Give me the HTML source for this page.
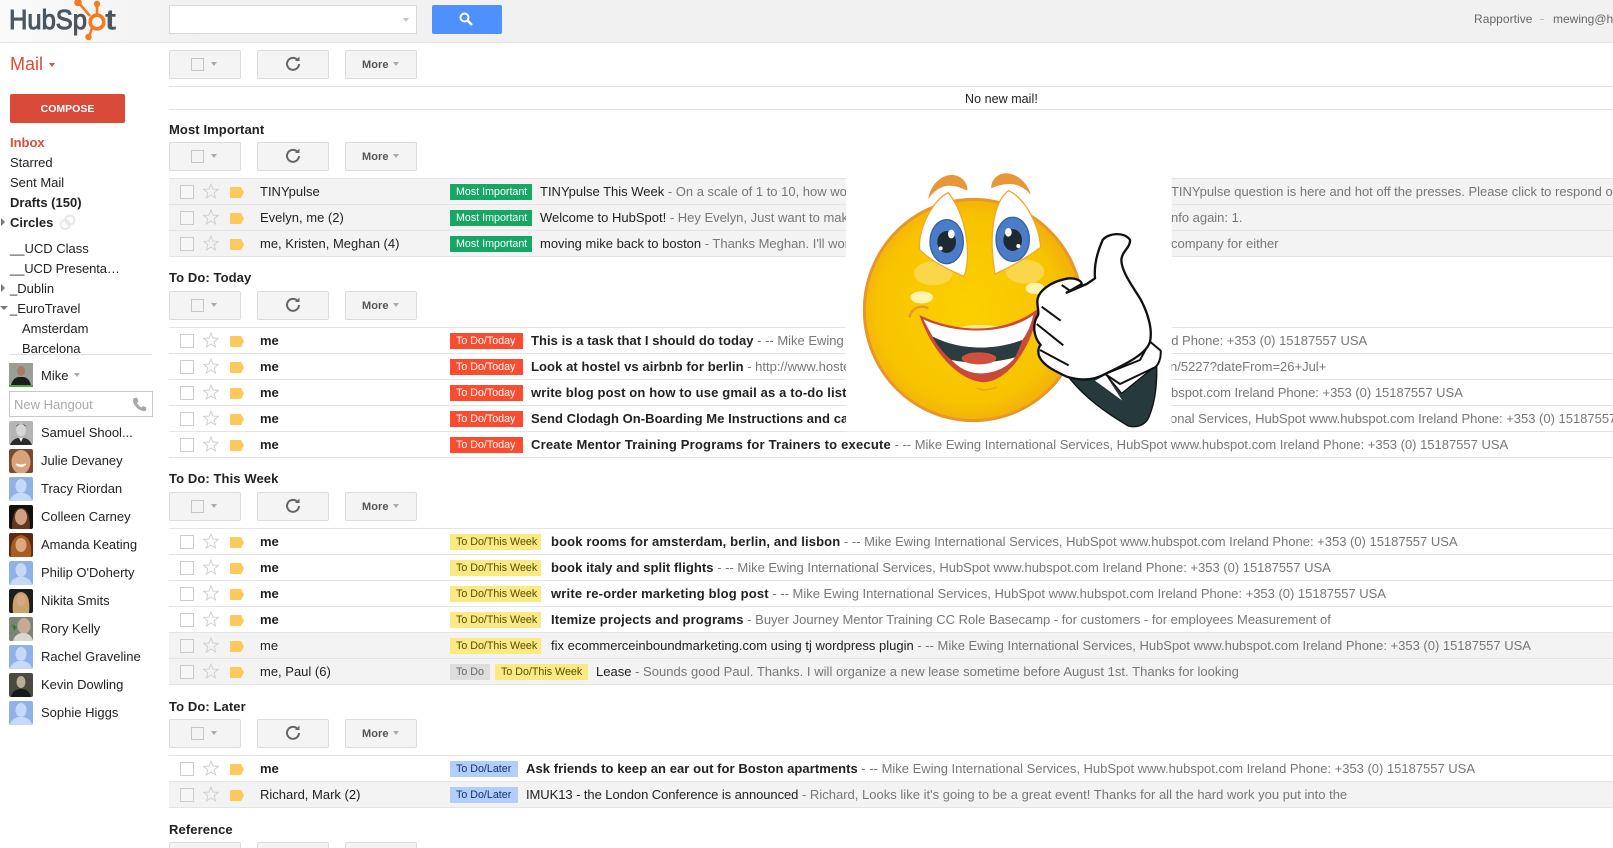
<!DOCTYPE html>
<html><head><meta charset="utf-8"><style>
html,body{margin:0;padding:0;background:#fff}
#p{position:relative;width:1613px;height:848px;overflow:hidden;font:13px "Liberation Sans",Arial,sans-serif;color:#222;background:#fff}
#p div,#p span.a,#p svg.a{position:absolute}
.hd{left:0;top:0;width:1613px;height:42px;background:linear-gradient(90deg,#fafafa 0,#f6f6f6 100px,#f1f1f1 200px);border-bottom:1px solid #e5e5e5}
.btn{width:70px;height:27px;background:#f4f4f4;border:1px solid #dcdcdc;border-radius:2px}
.cb{left:21px;top:7px;width:11px;height:11px;border:1px solid #c6c6c6}
.ar{width:0;height:0;border-left:3.5px solid transparent;border-right:3.5px solid transparent;border-top:4px solid #aaa}
.mo{left:16px;top:1px;line-height:27px;font-size:11px;font-weight:bold;color:#555;letter-spacing:.05px}
.h{left:169px;font-weight:bold;font-size:13px;line-height:16px;color:#222;white-space:nowrap;letter-spacing:.1px}
.r{left:168px;width:1445px;height:25px;border-top:1px solid #e4e4e4;line-height:25px;white-space:nowrap;clip-path:inset(0 0 0 1px)}
.g{background:#f3f3f3}
.e{height:0;left:169px;width:1444px;border-top:1px solid #e4e4e4}
.ck{left:12px;top:6px;width:12px;height:12px;border:1px solid #ccc;background:#fff}
.g .ck{background:#f6f6f6}
.s{left:35px;top:4px;width:16px;height:16px}
.l{left:62px;top:8px;width:14px;height:11px}
.n{left:92px;top:0;color:#222}
.u .n,.u .b{font-weight:bold}
.t{top:5px;height:16px;line-height:16px;font-size:10.7px;padding-left:6px;box-sizing:border-box}
.mi{left:282px;width:82px;background:#16a765;color:#fff}
.td{left:282px;width:73px;background:#fb4c2f;color:#fff}
.tw{left:282px;width:91px;background:#fbe983;color:#594c05}
.tl{left:282px;width:68px;background:#b3cefb;color:#0d3472}
.x{top:0;color:#222;white-space:nowrap}
.x em,.y{font-style:normal;color:#777;letter-spacing:-.01px}
.y{top:0;white-space:nowrap}
.nv{left:10px;line-height:16px;color:#222;white-space:nowrap}
.tri{width:0;height:0}
.av{left:9px;width:24px;height:24px;border-radius:2px;overflow:hidden}
.pn{left:41px;line-height:16px;color:#222;white-space:nowrap}
</style></head><body><div id="p">
<svg width="0" height="0" style="position:absolute"><defs>
<symbol id="star" viewBox="0 0 16 16"><path d="M8 1 L10 6.1 L15.4 6.3 L11.2 9.7 L12.6 15 L8 12 L3.4 15 L4.8 9.7 L.6 6.3 L6 6.1 Z" fill="none" stroke="#d0d0d0" stroke-width="1"/></symbol>
<symbol id="lab" viewBox="0 0 14 11"><path d="M0 1 Q0 0 1 0 H11 L14 5.5 L11 11 H1 Q0 11 0 10 Z" fill="#fbc95c"/></symbol>
<symbol id="ref" viewBox="0 0 16 16"><path d="M12.6 5 A6 6 0 1 0 14 9" fill="none" stroke="#666" stroke-width="2"/><path d="M10 6 H14.5 V1.5 Z" fill="#666"/></symbol>
<symbol id="def" viewBox="0 0 24 24"><rect width="24" height="24" fill="#8eb2e8"/><ellipse cx="12" cy="9" rx="5.5" ry="7" fill="#c6d9f6"/><path d="M1 24 Q2 18 9 16 H15 Q22 18 23 24 Z" fill="#c6d9f6"/></symbol>
</defs></svg>

<div class="hd"></div>
<svg class="a" style="left:0;top:0" width="130" height="42" viewBox="0 0 130 42">
<text x="9" y="29" font-family="Liberation Sans" font-size="28" fill="#4a5761" stroke="#4a5761" stroke-width="1" textLength="78" lengthAdjust="spacingAndGlyphs">HubSp</text>
<text x="105.5" y="29" font-family="Liberation Sans" font-size="28" fill="#4a5761" stroke="#4a5761" stroke-width="1" textLength="10" lengthAdjust="spacingAndGlyphs">t</text>
<g stroke="#f47b20" fill="none"><circle cx="97" cy="22" r="6.8" stroke-width="3.6"/><path d="M78 2 L90 16 M97 4 V14 M89 37 L92 28" stroke-width="2.6"/></g>
<g fill="#f47b20"><circle cx="78" cy="2.5" r="3.8"/><circle cx="97" cy="4" r="3.2"/><circle cx="88.5" cy="37" r="3.2"/></g>
</svg>
<div style="left:169px;top:5px;width:246px;height:27px;background:#fff;border:1px solid #d9d9d9"></div>
<div class="ar" style="left:403px;top:18px;border-top-color:#c4c4c4"></div>
<div style="left:432px;top:5px;width:70px;height:29px;background:#4d90fe;border-radius:2px"></div>
<svg class="a" style="left:459px;top:12px" width="14" height="14" viewBox="0 0 14 14"><circle cx="5.5" cy="5.5" r="4" fill="none" stroke="#fff" stroke-width="2"/><path d="M8.5 8.5 L13 13" stroke="#fff" stroke-width="2.4"/></svg>
<div style="left:1474px;top:12px;font-size:12px;line-height:15px;color:#666;white-space:nowrap;letter-spacing:.05px">Rapportive</div>
<div style="left:1540px;top:19px;width:4px;height:1px;background:#bbb"></div>
<div style="left:1553px;top:12px;font-size:12px;line-height:15px;color:#666;white-space:nowrap">mewing@hubspot.com</div>

<div style="left:10px;top:53px;font-size:18px;line-height:22px;color:#dd4b39">Mail</div>
<div class="ar" style="left:49px;top:63px;border-top-color:#dd4b39"></div>
<div style="left:10px;top:94px;width:115px;height:29px;background:#d94a38;border-radius:2px;color:#fff;font-size:10.5px;font-weight:bold;text-align:center;line-height:30px">COMPOSE</div>
<div class="nv" style="top:135px;color:#dd4b39;font-weight:bold">Inbox</div>
<div class="nv" style="top:155px">Starred</div>
<div class="nv" style="top:175px">Sent Mail</div>
<div class="nv" style="top:195px;font-weight:bold">Drafts (150)</div>
<div class="nv" style="top:215px;font-weight:bold">Circles</div>
<div class="tri" style="left:1px;top:218px;border-left:4px solid #777;border-top:4px solid transparent;border-bottom:4px solid transparent"></div>
<svg class="a" style="left:59px;top:214px" width="17" height="17" viewBox="0 0 17 17"><circle cx="6" cy="10.5" r="4.5" fill="none" stroke="#e8e8e8" stroke-width="2"/><circle cx="11" cy="6" r="4.5" fill="none" stroke="#e8e8e8" stroke-width="2"/></svg>
<div class="nv" style="top:241px">__UCD Class</div>
<div class="nv" style="top:261px;letter-spacing:-.1px">__UCD Presenta…</div>
<div class="nv" style="top:281px">_Dublin</div>
<div class="tri" style="left:1px;top:284px;border-left:4px solid #777;border-top:4px solid transparent;border-bottom:4px solid transparent"></div>
<div class="nv" style="top:301px">_EuroTravel</div>
<div class="tri" style="left:0;top:306px;border-top:4px solid #777;border-left:4px solid transparent;border-right:4px solid transparent"></div>
<div class="nv" style="top:321px;left:22px">Amsterdam</div>
<div class="nv" style="top:341px;left:22px">Barcelona</div>
<div style="left:9px;top:354px;width:143px;height:1px;background:#e2e2e2"></div>

<div class="av" style="top:363px;height:22px;border-radius:0"><svg width="24" height="22"><rect width="24" height="22" fill="#9a9f95"/><ellipse cx="12" cy="8" rx="4" ry="5" fill="#a87a60"/><path d="M2 22 Q4 15 9 14 H15 Q20 15 22 22 Z" fill="#1c1c1c"/></svg></div>
<div style="left:9px;top:385px;width:24px;height:2px;background:#4aa83c"></div>
<div class="pn" style="top:368px">Mike</div>
<div class="ar" style="left:74px;top:373px"></div>
<div style="left:9px;top:391px;width:142px;height:24px;border:1px solid #c8c8c8"></div>
<div class="pn" style="left:14px;top:397px;color:#aaa">New Hangout</div>
<svg class="a" style="left:132px;top:397px" width="15" height="15" viewBox="0 0 15 15"><path d="M2 1 L5 .5 L6.5 4.5 L5 6 Q6.5 9 9.5 10.5 L11 9 L14.5 10.5 L14 13.5 Q13 14.5 11 14 Q4 12.5 1 4.5 Q.8 2 2 1 Z" fill="#a8a8a8"/></svg>

<div class="av" style="top:421px"><svg width="24" height="24"><rect width="24" height="24" fill="#b5b5b5"/><ellipse cx="12" cy="9" rx="5" ry="6.5" fill="#d6d6d6"/><path d="M7 6 Q12 0 17 6 L16 4 Q12 2 8 4 Z" fill="#222"/><path d="M1 24 Q4 17 10 17 H14 Q20 17 23 24 Z" fill="#2a2a2a"/><path d="M10 17 L12 21 L14 17Z" fill="#eee"/></svg></div>
<div class="pn" style="top:425px">Samuel Shool...</div>
<div class="av" style="top:449px"><svg width="24" height="24"><rect width="24" height="24" fill="#7a4a30"/><ellipse cx="12" cy="13" rx="9.5" ry="12" fill="#d8a27a"/><path d="M7 15 Q12 20 17 15 Q12 17 7 15Z" fill="#fff" stroke="#fff"/></svg></div>
<div class="pn" style="top:453px">Julie Devaney</div>
<svg class="a av" style="top:477px"><use href="#def" width="24" height="24"/></svg>
<div class="pn" style="top:481px">Tracy Riordan</div>
<div class="av" style="top:505px"><svg width="24" height="24"><rect width="24" height="24" fill="#141010"/><path d="M3 24 Q3 3 12 3 Q21 3 21 24Z" fill="#5e3a22"/><ellipse cx="12" cy="12" rx="6" ry="8" fill="#d2a080"/></svg></div>
<div class="pn" style="top:509px">Colleen Carney</div>
<div class="av" style="top:533px"><svg width="24" height="24"><rect width="24" height="24" fill="#5a2a14"/><path d="M2 24 Q0 4 12 2 Q24 4 22 24Z" fill="#a85c22"/><ellipse cx="12" cy="12" rx="5.5" ry="7" fill="#dca880"/></svg></div>
<div class="pn" style="top:537px">Amanda Keating</div>
<svg class="a av" style="top:561px"><use href="#def" width="24" height="24"/></svg>
<div class="pn" style="top:565px">Philip O'Doherty</div>
<div class="av" style="top:589px"><svg width="24" height="24"><rect width="24" height="24" fill="#1e1e1e"/><path d="M4 24 Q2 4 12 3 Q22 4 20 24Z" fill="#c8a468"/><ellipse cx="12" cy="11" rx="4.5" ry="6" fill="#d8a888"/></svg></div>
<div class="pn" style="top:593px">Nikita Smits</div>
<div class="av" style="top:617px"><svg width="24" height="24"><rect width="24" height="24" fill="#7b8470"/><ellipse cx="15" cy="9" rx="6.5" ry="8" fill="#c8a896"/><path d="M4 24 Q6 16 14 16 Q22 16 24 24Z" fill="#d8d8d0"/><path d="M3 7 L8 10 L5 14Z" fill="#2f7a3a"/></svg></div>
<div class="pn" style="top:621px">Rory Kelly</div>
<svg class="a av" style="top:645px"><use href="#def" width="24" height="24"/></svg>
<div class="pn" style="top:649px">Rachel Graveline</div>
<div class="av" style="top:673px"><svg width="24" height="24"><rect width="24" height="24" fill="#4a4a42"/><ellipse cx="12" cy="9" rx="4.5" ry="6" fill="#b8ae98"/><path d="M2 24 Q4 16 12 16 Q20 16 22 24Z" fill="#181818"/></svg></div>
<div class="pn" style="top:677px">Kevin Dowling</div>
<svg class="a av" style="top:701px"><use href="#def" width="24" height="24"/></svg>
<div class="pn" style="top:705px">Sophie Higgs</div>

<!-- toolbar 1 -->
<div class="btn" style="left:169px;top:50px"><div class="cb"></div><div class="ar" style="left:41px;top:11px"></div></div>
<div class="btn" style="left:257px;top:50px"><svg class="a" style="left:27px;top:4px" width="16" height="16"><use href="#ref" width="16" height="16"/></svg></div>
<div class="btn" style="left:345px;top:50px"><div class="mo">More</div><div class="ar" style="left:47px;top:11px"></div></div>
<div class="e" style="top:86px"></div>
<div style="left:965px;top:91px;line-height:16px;font-size:12.5px;color:#222;white-space:nowrap;letter-spacing:.05px">No new mail!</div>
<div class="e" style="top:109px"></div>

<!-- Most Important -->
<div class="h" style="top:122px">Most Important</div>
<div class="btn" style="left:169px;top:142px"><div class="cb"></div><div class="ar" style="left:41px;top:11px"></div></div>
<div class="btn" style="left:257px;top:142px"><svg class="a" style="left:27px;top:4px" width="16" height="16"><use href="#ref" width="16" height="16"/></svg></div>
<div class="btn" style="left:345px;top:142px"><div class="mo">More</div><div class="ar" style="left:47px;top:11px"></div></div>

<div class="r g" style="top:178px"><div class="ck"></div><svg class="a s"><use href="#star" width="16" height="16"/></svg><svg class="a l"><use href="#lab" width="14" height="11"/></svg><div class="n">TINYpulse</div><div class="t mi">Most Important</div><div class="x" style="left:372px">TINYpulse This Week <em>- On a scale of 1 to 10, how would you rate</em></div><div class="y" style="left:1003px">TINYpulse question is here and hot off the presses. Please click to respond on</div></div>
<div class="r g" style="top:204px"><div class="ck"></div><svg class="a s"><use href="#star" width="16" height="16"/></svg><svg class="a l"><use href="#lab" width="14" height="11"/></svg><div class="n">Evelyn, me (2)</div><div class="t mi">Most Important</div><div class="x" style="left:372px">Welcome to HubSpot! <em>- Hey Evelyn, Just want to make sure</em></div><div class="y" style="left:1003px">nfo again: 1.</div></div>
<div class="r g" style="top:230px"><div class="ck"></div><svg class="a s"><use href="#star" width="16" height="16"/></svg><svg class="a l"><use href="#lab" width="14" height="11"/></svg><div class="n">me, Kristen, Meghan (4)</div><div class="t mi">Most Important</div><div class="x" style="left:372px">moving mike back to boston <em>- Thanks Meghan. I'll work on that</em></div><div class="y" style="left:1003px">company for either</div></div>
<div class="e" style="top:256px"></div>

<!-- To Do: Today -->
<div class="h" style="top:270px">To Do: Today</div>
<div class="btn" style="left:169px;top:291px"><div class="cb"></div><div class="ar" style="left:41px;top:11px"></div></div>
<div class="btn" style="left:257px;top:291px"><svg class="a" style="left:27px;top:4px" width="16" height="16"><use href="#ref" width="16" height="16"/></svg></div>
<div class="btn" style="left:345px;top:291px"><div class="mo">More</div><div class="ar" style="left:47px;top:11px"></div></div>

<div class="r u" style="top:327px"><div class="ck"></div><svg class="a s"><use href="#star" width="16" height="16"/></svg><svg class="a l"><use href="#lab" width="14" height="11"/></svg><div class="n">me</div><div class="t td">To Do/Today</div><div class="x" style="left:363px"><b style="letter-spacing:.06px">This is a task that I should do today</b> <em>- -- Mike Ewing International Services</em></div><div class="y" style="left:996px">nd Phone: +353 (0) 15187557 USA</div></div>
<div class="r u" style="top:353px"><div class="ck"></div><svg class="a s"><use href="#star" width="16" height="16"/></svg><svg class="a l"><use href="#lab" width="14" height="11"/></svg><div class="n">me</div><div class="t td">To Do/Today</div><div class="x" style="left:363px"><b style="letter-spacing:.09px">Look at hostel vs airbnb for berlin</b> <em>- http://www.hostelworld.com/hosteldetails</em></div><div class="y" style="left:1002px">n/5227?dateFrom=26+Jul+</div></div>
<div class="r u" style="top:379px"><div class="ck"></div><svg class="a s"><use href="#star" width="16" height="16"/></svg><svg class="a l"><use href="#lab" width="14" height="11"/></svg><div class="n">me</div><div class="t td">To Do/Today</div><div class="x" style="left:363px"><b style="letter-spacing:.14px">write blog post on how to use gmail as a to-do list</b></div><div class="y" style="left:1003px">bspot.com Ireland Phone: +353 (0) 15187557 USA</div></div>
<div class="r u" style="top:405px"><div class="ck"></div><svg class="a s"><use href="#star" width="16" height="16"/></svg><svg class="a l"><use href="#lab" width="14" height="11"/></svg><div class="n">me</div><div class="t td">To Do/Today</div><div class="x" style="left:363px"><b style="letter-spacing:.05px">Send Clodagh On-Boarding Me Instructions and calendar</b></div><div class="y" style="left:1002px">onal Services, HubSpot www.hubspot.com Ireland Phone: +353 (0) 15187557 USA</div></div>
<div class="r u" style="top:431px"><div class="ck"></div><svg class="a s"><use href="#star" width="16" height="16"/></svg><svg class="a l"><use href="#lab" width="14" height="11"/></svg><div class="n">me</div><div class="t td">To Do/Today</div><div class="x" style="left:363px"><b style="letter-spacing:.2px">Create Mentor Training Programs for Trainers to execute</b> <em>- -- Mike Ewing International Services, HubSpot www.hubspot.com Ireland Phone: +353 (0) 15187557 USA</em></div></div>
<div class="e" style="top:457px"></div>

<!-- To Do: This Week -->
<div class="h" style="top:471px">To Do: This Week</div>
<div class="btn" style="left:169px;top:492px"><div class="cb"></div><div class="ar" style="left:41px;top:11px"></div></div>
<div class="btn" style="left:257px;top:492px"><svg class="a" style="left:27px;top:4px" width="16" height="16"><use href="#ref" width="16" height="16"/></svg></div>
<div class="btn" style="left:345px;top:492px"><div class="mo">More</div><div class="ar" style="left:47px;top:11px"></div></div>

<div class="r u" style="top:528px"><div class="ck"></div><svg class="a s"><use href="#star" width="16" height="16"/></svg><svg class="a l"><use href="#lab" width="14" height="11"/></svg><div class="n">me</div><div class="t tw">To Do/This Week</div><div class="x" style="left:383px"><b style="letter-spacing:.14px">book rooms for amsterdam, berlin, and lisbon</b> <em>- -- Mike Ewing International Services, HubSpot www.hubspot.com Ireland Phone: +353 (0) 15187557 USA</em></div></div>
<div class="r u" style="top:554px"><div class="ck"></div><svg class="a s"><use href="#star" width="16" height="16"/></svg><svg class="a l"><use href="#lab" width="14" height="11"/></svg><div class="n">me</div><div class="t tw">To Do/This Week</div><div class="x" style="left:383px"><b style="letter-spacing:.08px">book italy and split flights</b> <em>- -- Mike Ewing International Services, HubSpot www.hubspot.com Ireland Phone: +353 (0) 15187557 USA</em></div></div>
<div class="r u" style="top:580px"><div class="ck"></div><svg class="a s"><use href="#star" width="16" height="16"/></svg><svg class="a l"><use href="#lab" width="14" height="11"/></svg><div class="n">me</div><div class="t tw">To Do/This Week</div><div class="x" style="left:383px"><b style="letter-spacing:.18px">write re-order marketing blog post</b> <em>- -- Mike Ewing International Services, HubSpot www.hubspot.com Ireland Phone: +353 (0) 15187557 USA</em></div></div>
<div class="r u" style="top:606px"><div class="ck"></div><svg class="a s"><use href="#star" width="16" height="16"/></svg><svg class="a l"><use href="#lab" width="14" height="11"/></svg><div class="n">me</div><div class="t tw">To Do/This Week</div><div class="x" style="left:383px"><b style="letter-spacing:.14px">Itemize projects and programs</b> <em>- Buyer Journey Mentor Training CC Role Basecamp - for customers - for employees Measurement of</em></div></div>
<div class="r g" style="top:632px"><div class="ck"></div><svg class="a s"><use href="#star" width="16" height="16"/></svg><svg class="a l"><use href="#lab" width="14" height="11"/></svg><div class="n">me</div><div class="t tw">To Do/This Week</div><div class="x" style="left:383px">fix ecommerceinboundmarketing.com using tj wordpress plugin <em>- -- Mike Ewing International Services, HubSpot www.hubspot.com Ireland Phone: +353 (0) 15187557 USA</em></div></div>
<div class="r g" style="top:658px"><div class="ck"></div><svg class="a s"><use href="#star" width="16" height="16"/></svg><svg class="a l"><use href="#lab" width="14" height="11"/></svg><div class="n">me, Paul (6)</div><div class="t" style="left:282px;width:40px;background:#ddd;color:#666">To Do</div><div class="t tw" style="left:327px;width:93px">To Do/This Week</div><div class="x" style="left:428px">Lease <em style="letter-spacing:.03px">- Sounds good Paul. Thanks. I will organize a new lease sometime before August 1st. Thanks for looking</em></div></div>
<div class="e" style="top:684px"></div>

<!-- To Do: Later -->
<div class="h" style="top:699px">To Do: Later</div>
<div class="btn" style="left:169px;top:719px"><div class="cb"></div><div class="ar" style="left:41px;top:11px"></div></div>
<div class="btn" style="left:257px;top:719px"><svg class="a" style="left:27px;top:4px" width="16" height="16"><use href="#ref" width="16" height="16"/></svg></div>
<div class="btn" style="left:345px;top:719px"><div class="mo">More</div><div class="ar" style="left:47px;top:11px"></div></div>

<div class="r u" style="top:755px"><div class="ck"></div><svg class="a s"><use href="#star" width="16" height="16"/></svg><svg class="a l"><use href="#lab" width="14" height="11"/></svg><div class="n">me</div><div class="t tl">To Do/Later</div><div class="x" style="left:358px"><b style="letter-spacing:.06px">Ask friends to keep an ear out for Boston apartments</b> <em>- -- Mike Ewing International Services, HubSpot www.hubspot.com Ireland Phone: +353 (0) 15187557 USA</em></div></div>
<div class="r g" style="top:781px"><div class="ck"></div><svg class="a s"><use href="#star" width="16" height="16"/></svg><svg class="a l"><use href="#lab" width="14" height="11"/></svg><div class="n">Richard, Mark (2)</div><div class="t tl">To Do/Later</div><div class="x" style="left:358px"><span style="letter-spacing:-.07px">IMUK13 - the London Conference is announced</span> <em style="letter-spacing:.01px">- Richard, Looks like it's going to be a great event! Thanks for all the hard work you put into the</em></div></div>
<div class="e" style="top:807px"></div>

<!-- Reference -->
<div class="h" style="top:822px">Reference</div>
<div class="btn" style="left:169px;top:842px"></div>
<div class="btn" style="left:257px;top:842px"></div>
<div class="btn" style="left:345px;top:842px"></div>

<!-- Smiley overlay -->
<svg class="a" style="left:820px;top:160px" width="360" height="280" viewBox="0 0 1080 840">
<defs><radialGradient id="fg" cx="48%" cy="50%" r="55%"><stop offset="0" stop-color="#fbd000"/><stop offset=".75" stop-color="#f8c400"/><stop offset="1" stop-color="#f0a810"/></radialGradient></defs>
<rect x="78" y="30" width="977" height="784" fill="#fff"/>
<ellipse cx="460" cy="450" rx="327" ry="332" fill="url(#fg)" stroke="#e8962a" stroke-width="9"/>
<path d="M325 118 C330 75 365 42 400 45 C425 47 445 70 442 92 C420 82 395 72 370 80 C350 88 335 100 325 118 Z" fill="#e8963a"/>
<path d="M632 105 C625 70 590 38 555 40 C530 42 512 62 514 85 C535 75 565 68 590 75 C610 82 622 92 632 105 Z" fill="#e8963a"/>
<ellipse cx="340" cy="340" rx="58" ry="36" fill="#fcd64a"/><ellipse cx="615" cy="335" rx="58" ry="36" fill="#fcd64a"/>
<path d="M385 98 C340 118 296 200 298 268 C330 302 390 332 432 349 C452 300 447 178 385 98 Z" fill="#fff" stroke="#f2a72a" stroke-width="4"/>
<path d="M565 92 C518 130 506 230 525 342 C570 322 622 292 662 262 C657 190 612 112 565 92 Z" fill="#fff" stroke="#f2a72a" stroke-width="4"/>
<ellipse cx="380" cy="245" rx="50" ry="66" fill="#4a7cc8" stroke="#2f63a8" stroke-width="4"/>
<ellipse cx="380" cy="246" rx="28" ry="33" fill="#1e2a30"/><ellipse cx="394" cy="222" rx="10" ry="13" fill="#fff"/><circle cx="362" cy="265" r="6" fill="#fff"/>
<ellipse cx="578" cy="238" rx="50" ry="66" fill="#4a7cc8" stroke="#2f63a8" stroke-width="4"/>
<ellipse cx="578" cy="240" rx="28" ry="33" fill="#1e2a30"/><ellipse cx="565" cy="217" rx="10" ry="13" fill="#fff"/><circle cx="595" cy="258" r="6" fill="#fff"/>
<ellipse cx="305" cy="412" rx="34" ry="18" fill="#fff4b0"/><ellipse cx="645" cy="385" rx="28" ry="17" fill="#fff4b0"/>
<ellipse cx="480" cy="505" rx="60" ry="10" fill="#fce98a"/>
<path d="M268 472 C275 445 300 432 325 445" fill="none" stroke="#e8962a" stroke-width="7"/>
<path d="M298 465 C400 515 545 530 655 445 C635 570 560 665 490 667 C410 660 335 570 298 465 Z" fill="#c94a38"/>
<path d="M310 478 C400 520 550 530 640 465 C630 505 618 525 607 540 C520 572 420 572 338 530 Z" fill="#fff"/>
<path d="M338 530 C420 572 520 572 607 540 C600 560 592 578 585 592 C510 615 440 615 395 600 C370 580 350 555 338 530 Z" fill="#2b3d40"/>
<path d="M395 600 C450 612 520 610 585 592 C560 625 520 640 480 640 C445 640 415 622 395 600 Z" fill="#fff"/>
<ellipse cx="477" cy="595" rx="52" ry="18" fill="#d0503f"/>
<path d="M470 685 Q495 695 530 682" fill="none" stroke="#eda21f" stroke-width="5"/>
<path d="M745 650 L800 660 L855 640 L905 700 L1010 615 C1012 680 1005 730 985 775 C975 795 950 805 925 798 C860 760 790 710 745 650 Z" fill="#263a3c" stroke="#111" stroke-width="4"/>
<path d="M825 662 L857 645 L907 722 Z" fill="#fff"/>
<path d="M990 545 L1022 572 C1024 595 1015 615 1005 622 L900 672 L855 642 L960 600 Z" fill="#fff" stroke="#111" stroke-width="6"/>
<path d="M740 398 L800 372 L825 355 C822 320 830 280 848 240 C865 218 915 215 930 240 C932 262 905 275 904 300 C905 335 935 375 960 415 C985 460 998 510 990 545 C980 585 900 620 855 642 C815 665 770 660 740 650 C710 635 672 620 658 590 C652 575 656 560 662 555 C640 530 638 495 650 472 C660 462 652 445 652 425 C652 395 690 365 740 356 C765 352 785 362 785 372 Z" fill="#fff" stroke="#111" stroke-width="7" stroke-linejoin="round"/>
<path d="M665 440 L722 482 M650 492 L730 556 M660 570 L746 616 M725 375 L750 392" fill="none" stroke="#111" stroke-width="6"/>
</svg>
</div></body></html>
